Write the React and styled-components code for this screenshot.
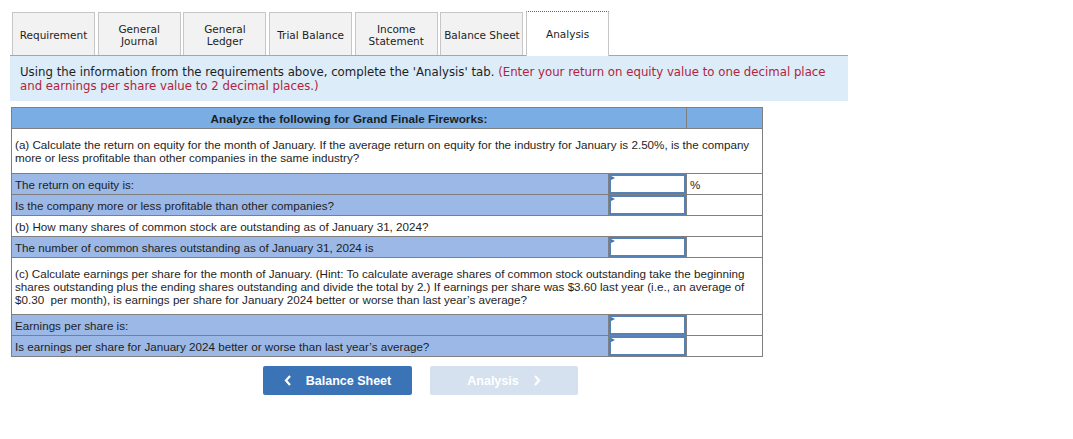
import React from "react";
import styled, { createGlobalStyle } from "styled-components";

const Global = createGlobalStyle`
  body {
    margin: 0;
    background: #fff;
  }
`;

const Page = styled.div`
  padding: 11px 0 0 10px;
  width: 838px;
`;

const Tabs = styled.div`
  display: flex;
  align-items: flex-end;
  gap: 2.7px;
  padding-left: 2px;
  height: 44px;
  border-bottom: 1px solid #a6a6a6;
`;

const Tab = styled.div`
  box-sizing: border-box;
  width: 83px;
  height: ${p => (p.active ? "45px" : "43px")};
  margin-bottom: ${p => (p.active ? "-1px" : "0")};
  display: flex;
  align-items: center;
  justify-content: center;
  text-align: center;
  font-family: "DejaVu Sans", Verdana, sans-serif;
  font-size: 10.5px;
  line-height: 12px;
  color: #1e1e1e;
  background: ${p => (p.active ? "#fff" : "#f2f2f2")};
  border: 1px solid #c6c6c6;
  border-bottom: none;
  border-top: ${p => (p.active ? "1px dotted #3b6fb0" : "1px solid #c6c6c6")};
  padding-top: ${p => (p.active ? "0" : "1px")};
`;

const Instructions = styled.div`
  background: #dcecf9;
  height: 45px;
  box-sizing: border-box;
  padding: 9px 10px 0;
  font-family: "DejaVu Sans", Verdana, sans-serif;
  font-size: 11.75px;
  line-height: 14px;
  color: #1e1e1e;
`;

const Red = styled.span`
  color: #b3243c;
`;

const Table = styled.table`
  margin: 6px 0 0 1px;
  border-collapse: collapse;
  width: 751px;
  table-layout: fixed;
  font-family: "Liberation Sans", Arial, sans-serif;
  font-size: 11.65px;
  color: #1e1e1e;
`;

const Row = styled.tr`
  height: ${p => p.h || 21}px;
  background: ${p => p.bg || "#fff"};
`;

const Cell = styled.td`
  border: 1px solid #7f7f7f;
  padding: ${p => (p.input ? "0" : "0 3px")};
  line-height: 13px;
  vertical-align: middle;
  text-align: ${p => (p.center ? "center" : "left")};
  font-weight: ${p => (p.bold ? "bold" : "normal")};
  font-size: ${p => (p.bold ? "11.75px" : "inherit")};
  background: ${p => p.bg || "inherit"};
`;

const InputWrap = styled.div`
  position: relative;
  height: 20px;
  &::before {
    content: "";
    position: absolute;
    left: 2px;
    top: 2px;
    border-left: 4px solid #3f73b5;
    border-top: 2.5px solid transparent;
    border-bottom: 2.5px solid transparent;
  }
`;

const Field = styled.input`
  box-sizing: border-box;
  width: 100%;
  height: 100%;
  margin: 0;
  border: 2px solid #5481b8;
  background: #fff;
  outline: none;
`;

const Buttons = styled.div`
  display: flex;
  gap: 18px;
  margin: 9px 0 0 253px;
`;

const NavButton = styled.button`
  width: ${p => p.w}px;
  height: 29px;
  border: none;
  border-radius: 2px;
  display: flex;
  align-items: center;
  justify-content: center;
  gap: 14px;
  font-family: "Liberation Sans", Arial, sans-serif;
  font-size: 12.5px;
  font-weight: bold;
  color: #fff;
  background: ${p => (p.disabled ? "#d5e1ef" : "#3a74b7")};
  cursor: ${p => (p.disabled ? "default" : "pointer")};
`;

const Chevron = ({ dir }) => (
  <svg width="8" height="11" viewBox="0 0 8 11">
    <path
      d={dir === "left" ? "M6 1 L2 5.5 L6 10" : "M2 1 L6 5.5 L2 10"}
      fill="none"
      stroke="#fff"
      strokeWidth="2.2"
    />
  </svg>
);

const Input = () => (
  <InputWrap>
    <Field type="text" />
  </InputWrap>
);

const tabs = [
  "Requirement",
  "General\nJournal",
  "General\nLedger",
  "Trial Balance",
  "Income\nStatement",
  "Balance Sheet",
  "Analysis",
];

const BLUE = "#9bb8e6";

export default function App() {
  return (
    <Page>
      <Global />
      <Tabs>
        {tabs.map(t => (
          <Tab key={t} active={t === "Analysis"}>
            <span>
              {t.split("\n").map((l, i) => (
                <React.Fragment key={i}>
                  {i > 0 && <br />}
                  {l}
                </React.Fragment>
              ))}
            </span>
          </Tab>
        ))}
      </Tabs>
      <Instructions>
        Using the information from the requirements above, complete the 'Analysis' tab.{" "}
        <Red>
          (Enter your return on equity value to one decimal place and earnings per share value
          to 2 decimal places.)
        </Red>
      </Instructions>
      <Table>
        <colgroup>
          <col style={{ width: 597 }} />
          <col style={{ width: 78 }} />
          <col style={{ width: 76 }} />
        </colgroup>
        <tbody>
          <Row bg="#79ade4">
            <Cell colSpan={2} center bold>
              Analyze the following for Grand Finale Fireworks:
            </Cell>
            <Cell />
          </Row>
          <Row h={45}>
            <Cell colSpan={3}>
              (a) Calculate the return on equity for the month of January. If the average return on
              equity for the industry for January is 2.50%, is the company more or less profitable
              than other companies in the same industry?
            </Cell>
          </Row>
          <Row bg={BLUE}>
            <Cell>The return on equity is:</Cell>
            <Cell input>
              <Input />
            </Cell>
            <Cell bg="#fff">%</Cell>
          </Row>
          <Row bg={BLUE}>
            <Cell>Is the company more or less profitable than other companies?</Cell>
            <Cell input>
              <Input />
            </Cell>
            <Cell bg="#fff" />
          </Row>
          <Row>
            <Cell colSpan={3}>
              (b) How many shares of common stock are outstanding as of January 31, 2024?
            </Cell>
          </Row>
          <Row bg={BLUE}>
            <Cell>The number of common shares outstanding as of January 31, 2024 is</Cell>
            <Cell input>
              <Input />
            </Cell>
            <Cell bg="#fff" />
          </Row>
          <Row h={57}>
            <Cell colSpan={3}>
              (c) Calculate earnings per share for the month of January. (Hint: To calculate average
              shares of common stock outstanding take the beginning shares outstanding plus the
              ending shares outstanding and divide the total by 2.) If earnings per share was $3.60
              last year (i.e., an average of $0.30&nbsp; per month), is earnings per share for
              January 2024 better or worse than last year’s average?
            </Cell>
          </Row>
          <Row bg={BLUE}>
            <Cell>Earnings per share is:</Cell>
            <Cell input>
              <Input />
            </Cell>
            <Cell bg="#fff" />
          </Row>
          <Row bg={BLUE}>
            <Cell>Is earnings per share for January 2024 better or worse than last year’s average?</Cell>
            <Cell input>
              <Input />
            </Cell>
            <Cell bg="#fff" />
          </Row>
        </tbody>
      </Table>
      <Buttons>
        <NavButton w={149}>
          <Chevron dir="left" />
          Balance Sheet
        </NavButton>
        <NavButton w={148} disabled>
          Analysis
          <Chevron dir="right" />
        </NavButton>
      </Buttons>
    </Page>
  );
}
